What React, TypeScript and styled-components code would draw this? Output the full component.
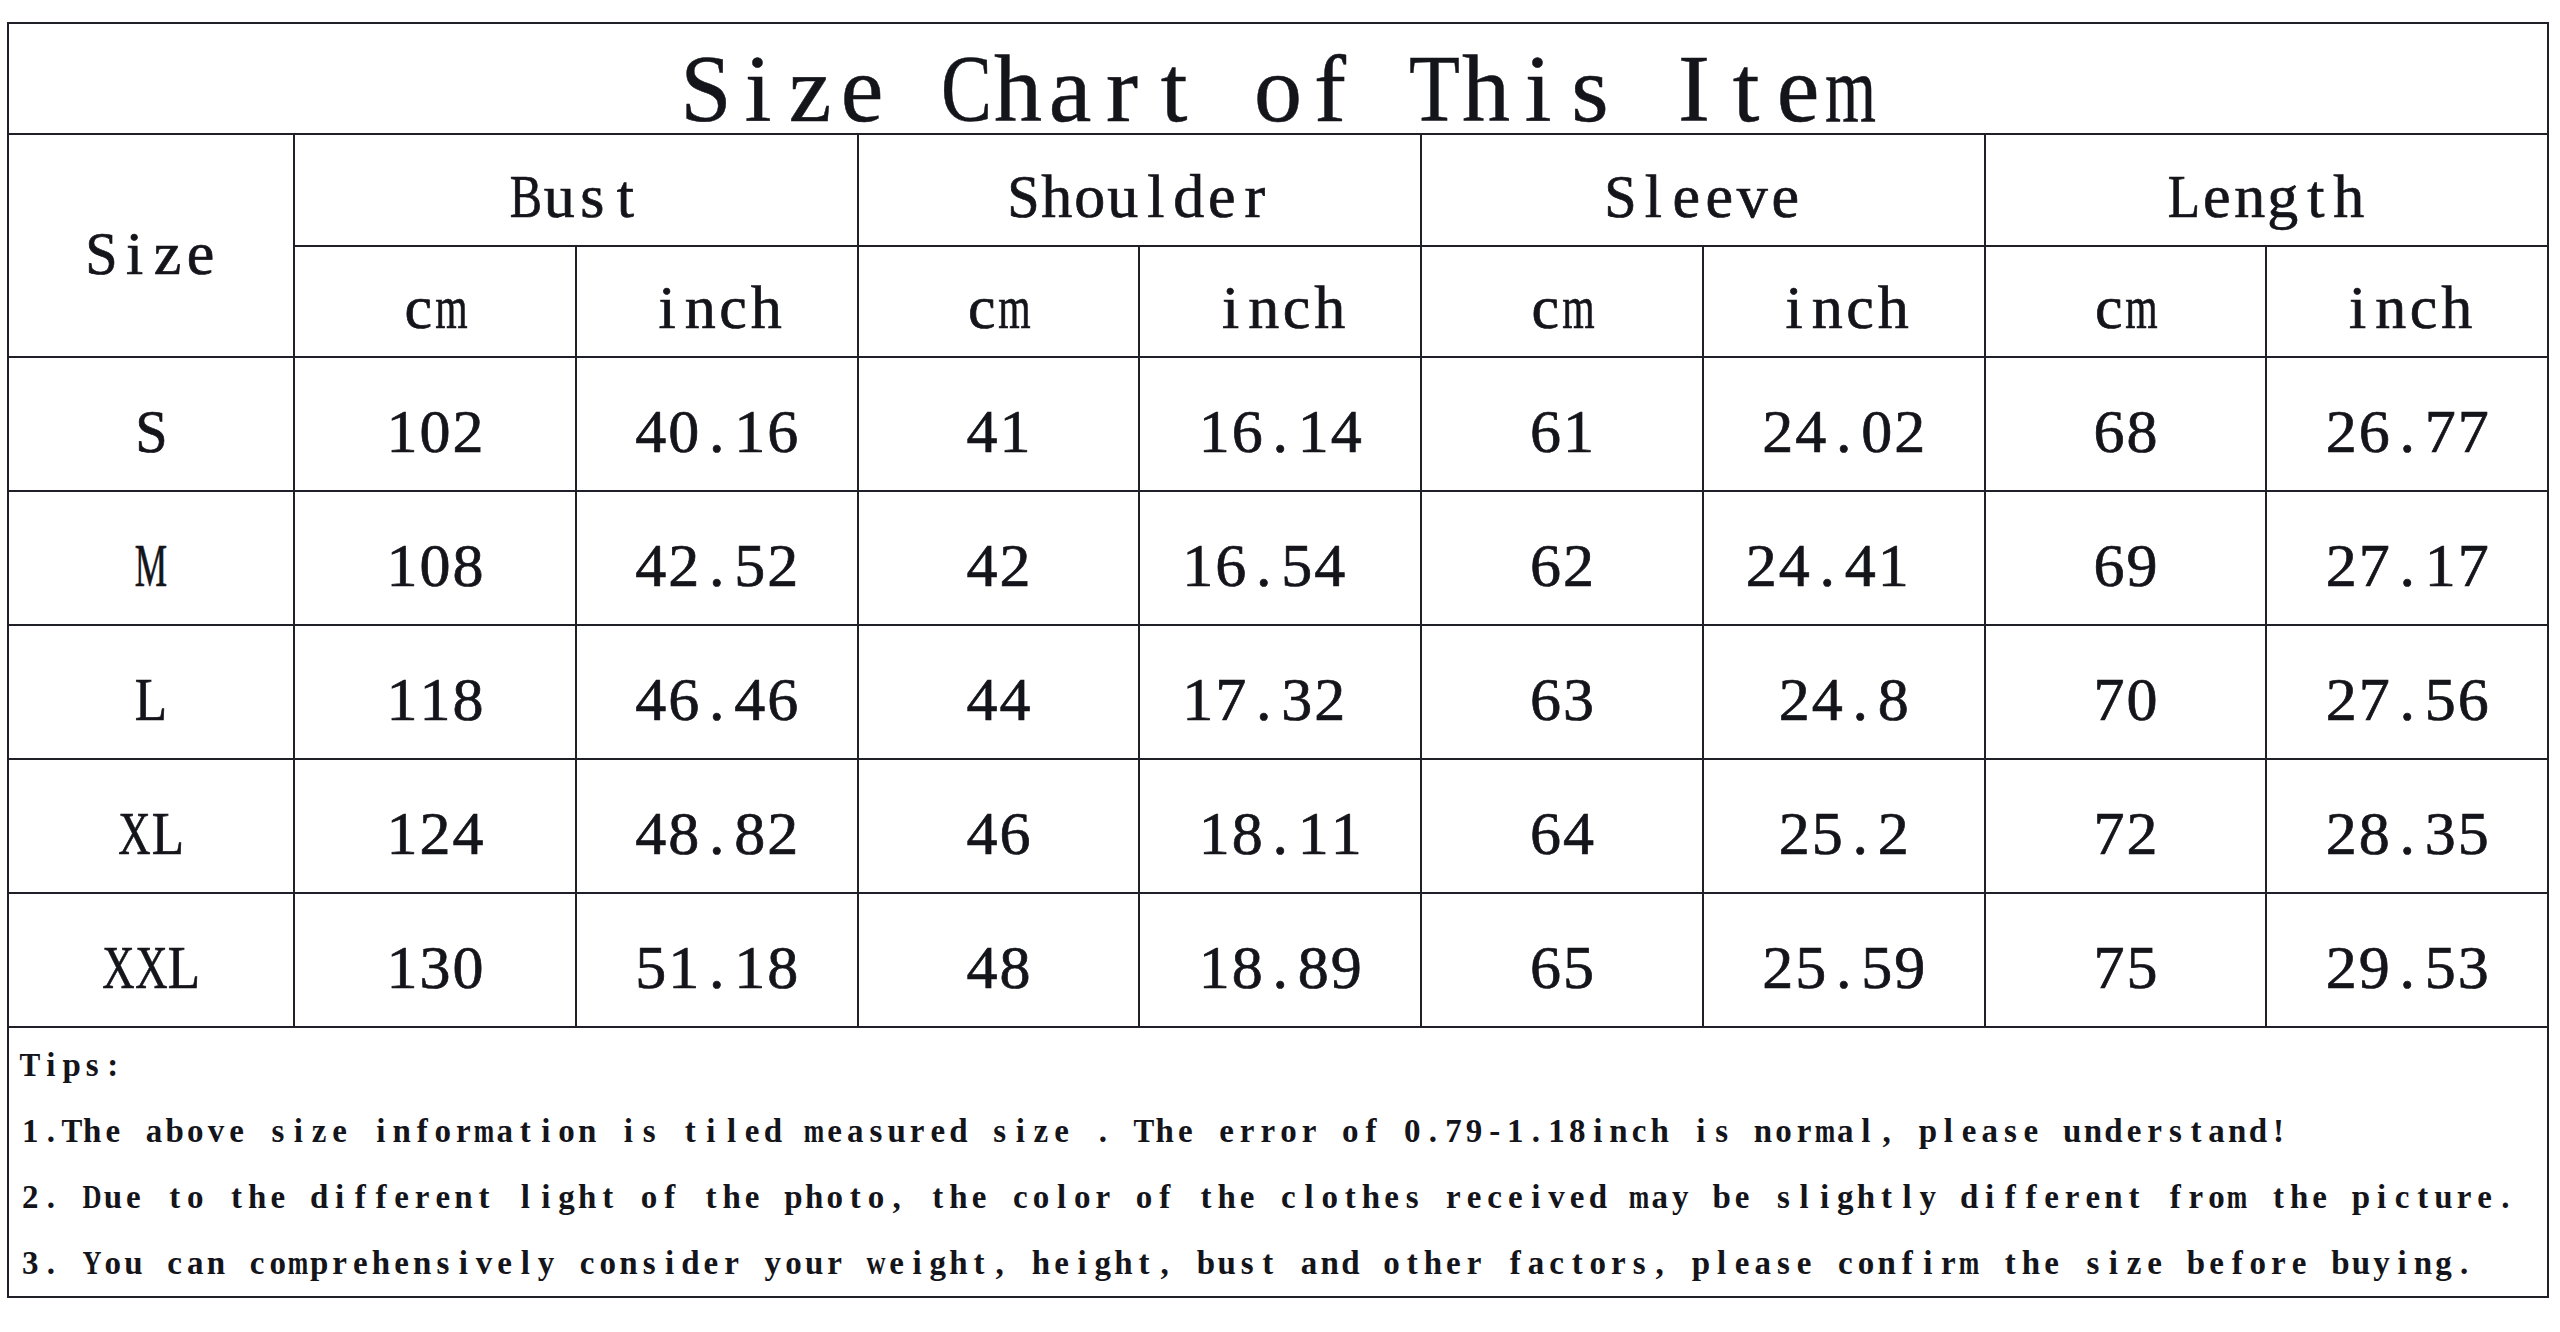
import React from 'react';
import styled, { createGlobalStyle } from 'styled-components';

const LINE = '#202029';
const INK = '#14141b';

const GlobalStyle = createGlobalStyle`
  html, body {
    margin: 0;
    padding: 0;
    background: #fff;
  }
  body {
    font-family: 'Liberation Serif', 'Times New Roman', serif;
    color: ${INK};
  }
`;

// advance widths of Liberation Serif (em), used to squeeze glyphs into fixed cells
const ADVANCE: Record<string, number> = {
  ' ': 0.25, '!': 0.333, ',': 0.25, '-': 0.333, '.': 0.25, ':': 0.278,
  A: 0.722, B: 0.667, C: 0.667, D: 0.722, E: 0.611, F: 0.556, G: 0.722, H: 0.722,
  I: 0.333, J: 0.389, K: 0.722, L: 0.611, M: 0.889, N: 0.722, O: 0.722, P: 0.556,
  Q: 0.722, R: 0.667, S: 0.556, T: 0.611, U: 0.722, V: 0.722, W: 0.944, X: 0.722,
  Y: 0.722, Z: 0.611,
  a: 0.444, b: 0.5, c: 0.444, d: 0.5, e: 0.444, f: 0.333, g: 0.5, h: 0.5, i: 0.278,
  j: 0.278, k: 0.5, l: 0.278, m: 0.778, n: 0.5, o: 0.5, p: 0.5, q: 0.5, r: 0.333,
  s: 0.389, t: 0.278, u: 0.5, v: 0.5, w: 0.722, x: 0.5, y: 0.5, z: 0.444,
};

type MonoProps = {
  text: string;
  size: number;
  pitch: number;
  bold?: boolean;
  stroke?: number;
};

// half-width monospaced text, like the Latin part of a Chinese system font
const Mono = ({ text, size, pitch, bold, stroke = 0 }: MonoProps) => (
  <MonoLine $size={size} $bold={!!bold} $stroke={stroke}>
    {Array.from(text).map((c, i) => {
      const adv = (ADVANCE[c] ?? 0.5) * size * (bold ? 1.06 : 1);
      const sx = Math.min(1, (pitch * 0.98) / adv);
      const box = Math.ceil(Math.max(pitch, adv + 2));
      return (
        <Ch key={i} $w={box} $pull={(box - pitch) / 2} $sx={sx}>
          {c === ' ' ? '\u00a0' : c}
        </Ch>
      );
    })}
  </MonoLine>
);

const rows = [
  { size: 'S', values: ['102', '40.16', '41', '16.14', '61', '24.02', '68', '26.77'] },
  { size: 'M', values: ['108', '42.52', '42', '16.54 ', '62', '24.41 ', '69', '27.17'] },
  { size: 'L', values: ['118', '46.46', '44', '17.32 ', '63', '24.8', '70', '27.56'] },
  { size: 'XL', values: ['124', '48.82', '46', '18.11', '64', '25.2', '72', '28.35'] },
  { size: 'XXL', values: ['130', '51.18', '48', '18.89', '65', '25.59', '75', '29.53'] },
];

const groups = ['Bust', 'Shoulder', 'Sleeve', 'Length'];

const tips = [
  'Tips:',
  '1.The above size information is tiled measured size . The error of 0.79-1.18inch is normal, please understand!',
  '2. Due to the different light of the photo, the color of the clothes received may be slightly different from the picture.',
  '3. You can comprehensively consider your weight, height, bust and other factors, please confirm the size before buying.',
];

const CELL_FONT = 62;
const CELL_PITCH = 33;
const CELL_STROKE = 0.7;

const App = () => {
  return (
    <>
      <GlobalStyle />
      <Table>
        <Cell $span={9} $drop={20}>
          <Mono text="Size Chart of This Item" size={96} pitch={52} stroke={0.5} />
        </Cell>

        <Cell $rows={2} $drop={14}>
          <Mono text="Size" size={CELL_FONT} pitch={CELL_PITCH} stroke={CELL_STROKE} />
        </Cell>
        {groups.map((g) => (
          <Cell key={g} $span={2} $drop={11}>
            <Mono text={g} size={CELL_FONT} pitch={CELL_PITCH} stroke={CELL_STROKE} />
          </Cell>
        ))}
        {groups.map((g) => (
          <React.Fragment key={g}>
            <Cell $drop={11}>
              <Mono text="cm" size={CELL_FONT} pitch={CELL_PITCH} stroke={CELL_STROKE} />
            </Cell>
            <Cell $drop={11}>
              <Mono text="inch" size={CELL_FONT} pitch={CELL_PITCH} stroke={CELL_STROKE} />
            </Cell>
          </React.Fragment>
        ))}

        {rows.map((r) => (
          <React.Fragment key={r.size}>
            <Cell $drop={14}>
              <Mono text={r.size} size={CELL_FONT} pitch={CELL_PITCH} stroke={CELL_STROKE} />
            </Cell>
            {r.values.map((v, i) => (
              <Cell key={i} $drop={14}>
                <Mono text={v} size={CELL_FONT} pitch={CELL_PITCH} stroke={CELL_STROKE} />
              </Cell>
            ))}
          </React.Fragment>
        ))}

        <TipsCell>
          {tips.map((t) => (
            <TipLine key={t}>
              <Mono text={t} size={33} pitch={20.6} bold />
            </TipLine>
          ))}
        </TipsCell>
      </Table>
    </>
  );
};

export default App;

const Table = styled.div`
  box-sizing: border-box;
  width: 2542px;
  margin: 22px 0 0 7px;
  padding: 2px;
  display: grid;
  grid-template-columns: 284px repeat(8, 1fr);
  grid-template-rows: 109px 110px 109px repeat(5, 132px) 268px;
  gap: 2px;
  background: ${LINE};
`;

const Cell = styled.div<{ $span?: number; $rows?: number; $drop: number }>`
  grid-column: span ${(p) => p.$span ?? 1};
  grid-row: span ${(p) => p.$rows ?? 1};
  box-sizing: border-box;
  padding-top: ${(p) => p.$drop}px;
  background: #fff;
  display: flex;
  align-items: center;
  justify-content: center;
`;

const TipsCell = styled.div`
  grid-column: 1 / -1;
  box-sizing: border-box;
  padding: 4px 0 0 11px;
  background: #fff;
  display: flex;
  flex-direction: column;
`;

const TipLine = styled.div`
  height: 66px;
  display: flex;
  align-items: center;
`;

const MonoLine = styled.span<{ $size: number; $bold: boolean; $stroke: number }>`
  display: flex;
  align-items: baseline;
  font-family: 'Liberation Serif', 'Times New Roman', serif;
  font-size: ${(p) => p.$size}px;
  font-weight: ${(p) => (p.$bold ? 700 : 400)};
  line-height: 1;
  white-space: pre;
  color: ${INK};
  -webkit-text-stroke: ${(p) => p.$stroke}px ${INK};
`;

const Ch = styled.span<{ $w: number; $pull: number; $sx: number }>`
  flex: none;
  display: flex;
  justify-content: center;
  width: ${(p) => p.$w}px;
  margin: 0 -${(p) => p.$pull}px;
  transform: scaleX(${(p) => p.$sx});
`;
